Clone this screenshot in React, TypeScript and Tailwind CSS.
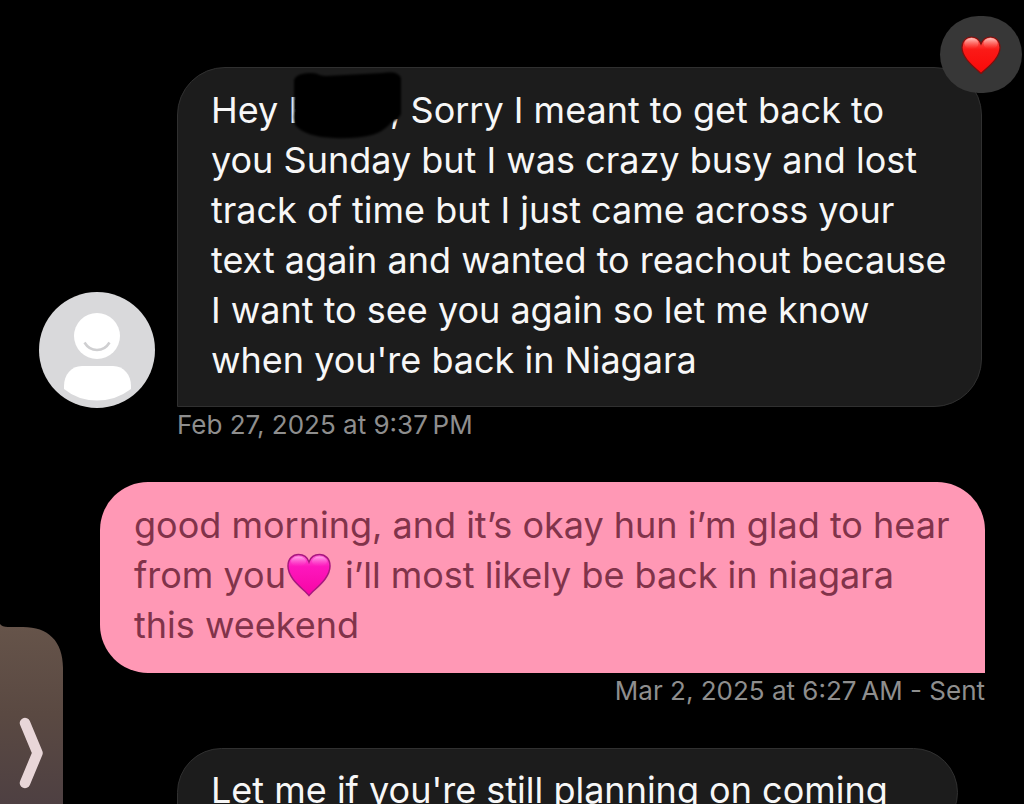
import type { ReactNode } from "react";

function Lines({ rows }: { rows: ReactNode[] }) {
  return (
    <p className="text-[36px] leading-[50px] whitespace-nowrap">
      {rows.map((row, i) => (
        <span key={i} className="block">
          {row}
        </span>
      ))}
    </p>
  );
}

function RedHeart() {
  return (
    <svg viewBox="0 0 40 38" className="h-[38px] w-10" role="img" aria-label="Red heart">
      <defs>
        <linearGradient id="red-fill" x1="0" y1="0" x2="0" y2="1">
          <stop offset="0" stopColor="#ff6a62" />
          <stop offset="0.35" stopColor="#fb1a17" />
          <stop offset="1" stopColor="#fa0808" />
        </linearGradient>
        <linearGradient id="red-shine" x1="0" y1="0" x2="0" y2="1">
          <stop offset="0" stopColor="#ffd0cb" stopOpacity="0.9" />
          <stop offset="1" stopColor="#ff5a50" stopOpacity="0" />
        </linearGradient>
      </defs>
      <path
        d="M20 37.500C14 31.500 1 22.500 1 11.500C1 5 5 1 10.500 1C15 1 18.500 4 20 8C21.500 4 25 1 29.500 1C35 1 39 5 39 11.500C39 22.500 26 31.500 20 37.500Z"
        fill="url(#red-fill)"
        stroke="#7d0f0d"
        strokeWidth="1.200"
      />
      <ellipse cx="10.500" cy="7.500" rx="7" ry="5.500" fill="url(#red-shine)" />
      <ellipse cx="29.500" cy="7.500" rx="7" ry="5.500" fill="url(#red-shine)" />
    </svg>
  );
}

function PinkHeart() {
  return (
    <svg
      viewBox="0 0 44 44"
      className="mr-1 ml-px inline-block h-11 w-11 align-[-9px]"
      role="img"
      aria-label="Pink heart"
    >
      <defs>
        <linearGradient id="pink-fill" x1="0" y1="0" x2="0" y2="1">
          <stop offset="0" stopColor="#ff62d4" />
          <stop offset="0.3" stopColor="#fd17bd" />
          <stop offset="1" stopColor="#f705a4" />
        </linearGradient>
        <linearGradient id="pink-shine" x1="0" y1="0" x2="0" y2="1">
          <stop offset="0" stopColor="#ffb9ee" stopOpacity="0.8" />
          <stop offset="1" stopColor="#ff3cc9" stopOpacity="0" />
        </linearGradient>
      </defs>
      <path
        d="M22 42.500C16 35.500 1 26 1 13C1 6 5.500 1.500 11.500 1.500C16.500 1.500 20.500 4.500 22 9C23.500 4.500 27.500 1.500 32.500 1.500C38.500 1.500 43 6 43 13C43 26 28 35.500 22 42.500Z"
        fill="url(#pink-fill)"
        stroke="#a8187f"
        strokeWidth="1.500"
      />
      <ellipse cx="11.500" cy="8.500" rx="7.500" ry="5" fill="url(#pink-shine)" />
      <ellipse cx="32.500" cy="8.500" rx="7.500" ry="5" fill="url(#pink-shine)" />
    </svg>
  );
}

function HiddenName() {
  return (
    <span className="relative inline-flex w-28 justify-between">
      <span>F</span>
      <span>,</span>
      <svg
        viewBox="0 0 112 70"
        className="absolute -top-[15px] left-1 h-[70px] w-28"
        aria-hidden="true"
      >
        <defs>
          <filter id="soft" x="-5%" y="-5%" width="110%" height="110%">
            <feGaussianBlur stdDeviation="1.200" />
          </filter>
        </defs>
        <path
          d="M2 10C4 4 12 3 20 3C27 3 26 6 34 6L90 3Q106 0 109 8L109 44Q106 50 99 53Q91 62 80 65Q62 69 42 68Q14 67 4 56Q1 52 2 42Z"
          fill="#000"
          filter="url(#soft)"
        />
      </svg>
    </span>
  );
}

function Avatar() {
  return (
    <svg viewBox="0 0 116 116" className="-mb-px h-[116px] w-[116px] shrink-0" role="img" aria-label="Contact">
      <circle cx="58" cy="58" r="58" fill="#d9d9db" />
      <circle cx="58" cy="44" r="23" fill="#fff" />
      <path d="M45.500 50.500Q50 58 58 58Q66 58 70.500 50.500" fill="none" stroke="#cfcfd1" strokeWidth="2.500" />
      <path
        d="M43 74H74C85 74 92 83 92 94V97Q77 108.500 58 108.500Q39 108.500 25 97V94C25 83 32 74 43 74Z"
        fill="#fff"
      />
    </svg>
  );
}

function SideHandle() {
  return (
    <button
      type="button"
      aria-label="Open panel"
      className="absolute bottom-0 left-0 h-[180px] w-[63px]"
    >
      <svg viewBox="0 0 63 180" className="h-full w-full" aria-hidden="true">
        <defs>
          <linearGradient id="panel" x1="0" y1="0" x2="0" y2="1">
            <stop offset="0" stopColor="#66544a" />
            <stop offset="0.500" stopColor="#5a4942" />
            <stop offset="1" stopColor="#4e4042" />
          </linearGradient>
        </defs>
        <path d="M0 0Q2 3 8 3H23C48 3 63 17 63 44V180H0Z" fill="url(#panel)" />
        <path
          d="M25 99L37.500 129L25 159"
          fill="none"
          stroke="#e8d6d8"
          strokeWidth="10.500"
          strokeLinecap="round"
          strokeLinejoin="round"
        />
      </svg>
    </button>
  );
}

export default function App() {
  return (
    <main className="relative flex h-screen flex-col overflow-hidden bg-black pr-[39px] pl-[39px] font-['Inter',sans-serif]">
      <article className="pt-[67px]">
        <div className="flex items-end gap-[22px]">
          <Avatar />
          <div className="relative mr-[3px] flex-1 rounded-[48px] rounded-bl-none border border-[#303030] bg-[#1c1c1c] pt-[17px] pb-[21px] pl-[33px] text-[#f7f7f7]">
            <Lines
              rows={[
                <>
                  Hey <HiddenName /> Sorry I meant to get back to
                </>,
                "you Sunday but I was crazy busy and lost",
                "track of time but I just came across your",
                "text again and wanted to reachout because",
                "I want to see you again so let me know",
                "when you're back in Niagara",
              ]}
            />
            <div className="absolute -top-[52px] -right-[41px] flex h-[77px] w-[82px] items-center justify-center rounded-full bg-[#373737]">
              <RedHeart />
            </div>
          </div>
        </div>
        <time className="ml-[138px] block text-[26px] leading-9 text-[#8e8e8e]">
          Feb 27, 2025 at 9:37{"\u202f"}PM
        </time>
      </article>

      <article className="mt-[39px] ml-[61px]">
        <div className="rounded-[48px] rounded-br-none bg-[#ff98b5] pt-[18px] pb-[23px] pl-[34px] text-[#81334a]">
          <Lines
            rows={[
              "good morning, and it’s okay hun i’m glad to hear",
              <>
                from you
                <PinkHeart /> i’ll most likely be back in niagara
              </>,
              "this weekend",
            ]}
          />
        </div>
        <p className="text-right text-[26px] leading-9 text-[#8e8e8e]">
          Mar 2, 2025 at 6:27{"\u202f"}AM - Sent
        </p>
      </article>

      <article className="mt-[39px] mr-[27px] ml-[138px] rounded-[48px] rounded-bl-none border border-[#303030] bg-[#1c1c1c] pt-4 pb-[21px] pl-[33px] text-[#f7f7f7]">
        <Lines rows={["Let me if you're still planning on coming"]} />
      </article>

      <SideHandle />
    </main>
  );
}
